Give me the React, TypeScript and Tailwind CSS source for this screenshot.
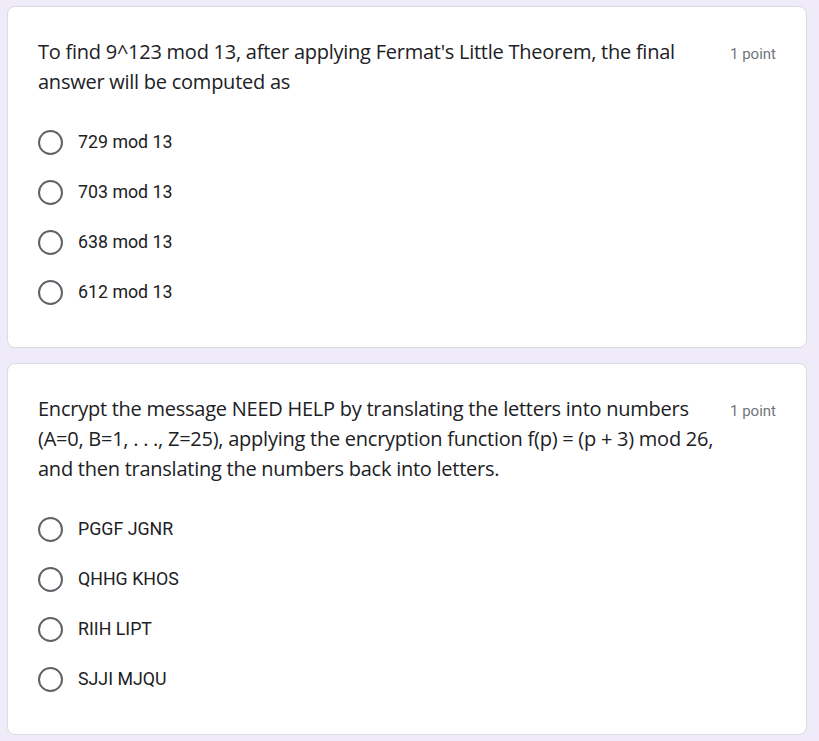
const questions = [
  {
    lines: [
      "To find 9^123 mod 13, after applying Fermat's Little Theorem, the final",
      "answer will be computed as",
    ],
    options: ["729 mod 13", "703 mod 13", "638 mod 13", "612 mod 13"],
  },
  {
    lines: [
      "Encrypt the message NEED HELP by translating the letters into numbers",
      "(A=0, B=1, . . ., Z=25), applying the encryption function f(p) = (p + 3) mod 26,",
      "and then translating the numbers back into letters.",
    ],
    options: ["PGGF JGNR", "QHHG KHOS", "RIIH LIPT", "SJJI MJQU"],
  },
];

function Radio() {
  return <div className="w-[25px] h-[25px] rounded-full border-[2.5px] border-[#5f6368] shrink-0" />;
}

function QuestionCard({ lines, options }: { lines: string[]; options: string[] }) {
  return (
    <div className="bg-white border border-[#dadce0] rounded-[8px] px-[30px] pt-[30px] pb-[30px]">
      <div className="flex justify-between items-start">
        <div className="text-[20px] leading-[30px] text-[#202124] font-['Open_Sans',sans-serif] tracking-[-0.25px]">
          {lines.map((l, i) => (
            <div key={i} className="whitespace-nowrap">{l}</div>
          ))}
        </div>
        <div className="text-[15px] leading-[30px] mt-[2px] text-[#70757a] font-['Roboto',sans-serif] whitespace-nowrap">
          1 point
        </div>
      </div>
      <div className="mt-[20px] flex flex-col">
        {options.map((o) => (
          <div key={o} className="h-[50px] flex items-center gap-[15px]">
            <Radio />
            <span className="text-[17.8px] text-[#202124] font-['Roboto',sans-serif]">{o}</span>
          </div>
        ))}
      </div>
    </div>
  );
}

export default function App() {
  return (
    <div className="min-h-[741px] bg-[#f0ebf8] pl-[7px] pr-[12px] pt-[6px] pb-[6px] flex flex-col gap-[15px]">
      {questions.map((q, i) => (
        <QuestionCard key={i} lines={q.lines} options={q.options} />
      ))}
    </div>
  );
}
